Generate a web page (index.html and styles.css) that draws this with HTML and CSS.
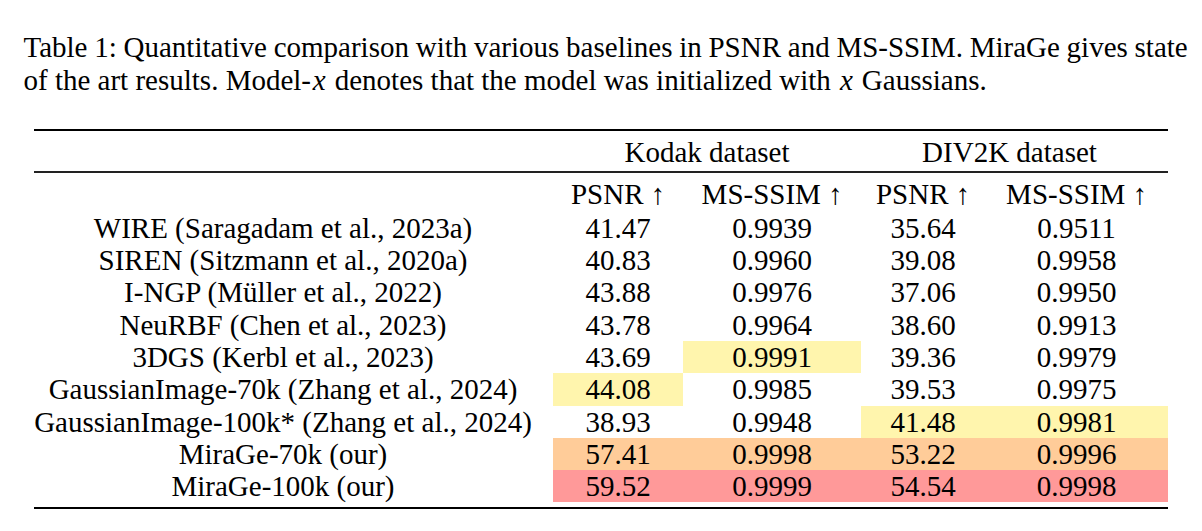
FILE: index.html
```html
<!DOCTYPE html>
<html lang="en">
<head>
<meta charset="utf-8">
<title>Table 1</title>
<link rel="stylesheet" href="styles.css">
</head>
<body>
<figure class="figure">
  <p class="caption"><span class="line-justified">Table 1: Quantitative comparison with various baselines in PSNR and MS-SSIM. MiraGe gives state</span><br>of the art results. Model-<i class="math">x</i> denotes that the model was initialized with <i class="math">x</i> Gaussians.</p>
  <div class="table">
    <div class="rule rule-top"></div>

    <div class="cell head1"></div>
    <div class="cell head1 span2">Kodak dataset</div>
    <div class="cell head1 span2 div2k">DIV2K dataset</div>

    <div class="rule rule-mid"></div>

    <div class="cell head2"></div>
    <div class="cell head2">PSNR <span class="arrow">↑</span></div>
    <div class="cell head2">MS-SSIM <span class="arrow">↑</span></div>
    <div class="cell head2">PSNR <span class="arrow">↑</span></div>
    <div class="cell head2">MS-SSIM <span class="arrow">↑</span></div>

    <div class="cell label">WIRE (Saragadam et al., 2023a)</div>
    <div class="cell">41.47</div><div class="cell">0.9939</div><div class="cell">35.64</div><div class="cell">0.9511</div>

    <div class="cell label">SIREN (Sitzmann et al., 2020a)</div>
    <div class="cell">40.83</div><div class="cell">0.9960</div><div class="cell">39.08</div><div class="cell">0.9958</div>

    <div class="cell label">I-NGP (Müller et al., 2022)</div>
    <div class="cell">43.88</div><div class="cell">0.9976</div><div class="cell">37.06</div><div class="cell">0.9950</div>

    <div class="cell label">NeuRBF (Chen et al., 2023)</div>
    <div class="cell">43.78</div><div class="cell">0.9964</div><div class="cell">38.60</div><div class="cell">0.9913</div>

    <div class="cell label">3DGS (Kerbl et al., 2023)</div>
    <div class="cell">43.69</div><div class="cell hl-yellow">0.9991</div><div class="cell">39.36</div><div class="cell">0.9979</div>

    <div class="cell label">GaussianImage-70k (Zhang et al., 2024)</div>
    <div class="cell hl-yellow">44.08</div><div class="cell">0.9985</div><div class="cell">39.53</div><div class="cell">0.9975</div>

    <div class="cell label">GaussianImage-100k* (Zhang et al., 2024)</div>
    <div class="cell">38.93</div><div class="cell">0.9948</div><div class="cell hl-yellow">41.48</div><div class="cell hl-yellow">0.9981</div>

    <div class="cell label">MiraGe-70k (our)</div>
    <div class="cell hl-orange">57.41</div><div class="cell hl-orange">0.9998</div><div class="cell hl-orange">53.22</div><div class="cell hl-orange">0.9996</div>

    <div class="cell label">MiraGe-100k (our)</div>
    <div class="cell hl-red">59.52</div><div class="cell hl-red">0.9999</div><div class="cell hl-red">54.54</div><div class="cell hl-red">0.9998</div>

    <div class="rule rule-bottom"></div>
  </div>
</figure>
</body>
</html>
```

FILE: styles.css
```css
* {
  box-sizing: border-box;
}

html,
body {
  margin: 0;
  padding: 0;
  background: #ffffff;
}

body {
  color: #000000;
  font-family: "Liberation Serif", "Times New Roman", serif;
  font-size: 29px;
  width: 1202px;
  height: 531px;
  overflow: hidden;
}

.figure {
  margin: 0;
  padding: 0;
}

.caption {
  margin: 0;
  padding: 31px 0 0 23.5px;
  line-height: 33px;
  white-space: nowrap;
}

.line-justified {
  word-spacing: -0.5px;
}

.math {
  font-style: italic;
  padding: 0 1.8px;
}

.table {
  display: grid;
  grid-template-columns: 519px 130px 178px 124px 183px;
  margin: 32px 0 0 34px;
  width: 1134px;
}

.rule {
  grid-column: 1 / -1;
  height: 2px;
  background: #000000;
}

.rule-mid {
  background: #222222;
}

.rule-bottom {
  margin-top: 5px;
}

.cell {
  display: flex;
  justify-content: center;
  white-space: nowrap;
  height: 32.3px;
  line-height: 32.3px;
}

.span2 {
  grid-column: span 2;
}

.head1 {
  height: 40px;
  padding-top: 4.8px;
}

.div2k {
  padding-right: 10px;
}

.head2 {
  height: 38.8px;
  padding-top: 5px;
}

.label {
  padding-right: 21px;
}

.arrow {
  margin-left: 7px;
}

.hl-yellow {
  background: #fff5ad;
}

.hl-orange {
  background: #ffcc99;
}

.hl-red {
  background: #ff9999;
}
```
